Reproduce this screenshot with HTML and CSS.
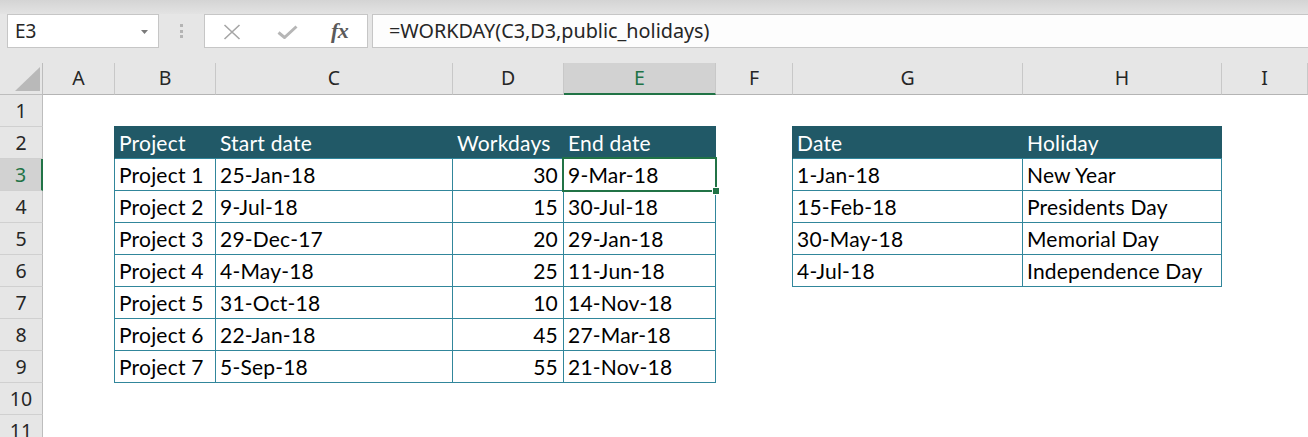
FILE: index.html
```html
<!DOCTYPE html>
<html>
<head>
<meta charset="utf-8">
<title>WORKDAY</title>
<link rel="stylesheet" href="styles.css">
</head>
<body>
<div class="app">
  <div class="topstrip"></div>
  <div class="fbar">
    <div class="namebox"><span>E3</span><svg class="dd" width="7" height="4" viewBox="0 0 7 4"><path d="M0 0h7L3.5 4z" fill="#7a7a7a"/></svg></div>
    <div class="grip"><i></i><i></i><i></i></div>
    <div class="fxbox">
      <svg class="ico" width="18" height="16" viewBox="0 0 18 16"><path d="M1.5 1L16.5 15M16.5 1L1.5 15" stroke="#a6a6a6" stroke-width="1.6" fill="none"/></svg>
      <svg class="ico" width="21" height="14" viewBox="0 0 21 14"><path d="M1.5 7.5L7.5 12.5L19.5 1.5" stroke="#b6b6b6" stroke-width="3" fill="none" stroke-linejoin="miter"/></svg>
      <span class="fx">fx</span>
    </div>
    <div class="formula">=WORKDAY(C3,D3,public_holidays)</div>
  </div>
  <div class="sheet">
    <div class="row colhead">
      <div class="corner"><svg width="25" height="24" viewBox="0 0 25 24"><path d="M25 0V24H0z" fill="#b9b9b9"/></svg></div>
      <div class="ch">A</div><div class="ch">B</div><div class="ch">C</div><div class="ch">D</div><div class="ch sel">E</div><div class="ch">F</div><div class="ch">G</div><div class="ch">H</div><div class="ch">I</div>
    </div>
    <div class="row">
      <div class="rh">1</div><div></div><div></div><div></div><div></div><div></div><div></div><div></div><div></div><div></div>
    </div>
    <div class="row">
      <div class="rh">2</div><div></div>
      <div class="th first">Project</div><div class="th">Start date</div><div class="th">Workdays</div><div class="th">End date</div>
      <div></div>
      <div class="th first">Date</div><div class="th">Holiday</div><div></div>
    </div>
    <div class="row">
      <div class="rh sel">3</div><div></div>
      <div class="td first">Project 1</div><div class="td">25-Jan-18</div><div class="td num">30</div><div class="td active">9-Mar-18<span class="selbox"><span class="handle"></span></span></div>
      <div></div>
      <div class="td first">1-Jan-18</div><div class="td">New Year</div><div></div>
    </div>
    <div class="row">
      <div class="rh">4</div><div></div>
      <div class="td first">Project 2</div><div class="td">9-Jul-18</div><div class="td num">15</div><div class="td">30-Jul-18</div>
      <div></div>
      <div class="td first">15-Feb-18</div><div class="td">Presidents Day</div><div></div>
    </div>
    <div class="row">
      <div class="rh">5</div><div></div>
      <div class="td first">Project 3</div><div class="td">29-Dec-17</div><div class="td num">20</div><div class="td">29-Jan-18</div>
      <div></div>
      <div class="td first">30-May-18</div><div class="td">Memorial Day</div><div></div>
    </div>
    <div class="row">
      <div class="rh">6</div><div></div>
      <div class="td first">Project 4</div><div class="td">4-May-18</div><div class="td num">25</div><div class="td">11-Jun-18</div>
      <div></div>
      <div class="td first">4-Jul-18</div><div class="td">Independence Day</div><div></div>
    </div>
    <div class="row">
      <div class="rh">7</div><div></div>
      <div class="td first">Project 5</div><div class="td">31-Oct-18</div><div class="td num">10</div><div class="td">14-Nov-18</div>
      <div></div><div></div><div></div><div></div>
    </div>
    <div class="row">
      <div class="rh">8</div><div></div>
      <div class="td first">Project 6</div><div class="td">22-Jan-18</div><div class="td num">45</div><div class="td">27-Mar-18</div>
      <div></div><div></div><div></div><div></div>
    </div>
    <div class="row">
      <div class="rh">9</div><div></div>
      <div class="td first">Project 7</div><div class="td">5-Sep-18</div><div class="td num">55</div><div class="td">21-Nov-18</div>
      <div></div><div></div><div></div><div></div>
    </div>
    <div class="row">
      <div class="rh">10</div><div></div><div></div><div></div><div></div><div></div><div></div><div></div><div></div><div></div>
    </div>
    <div class="row">
      <div class="rh">11</div><div></div><div></div><div></div><div></div><div></div><div></div><div></div><div></div><div></div>
    </div>
  </div>
</div>
</body>
</html>
```

FILE: styles.css
```css
* { box-sizing: border-box; }
html, body { margin: 0; padding: 0; }
body {
  width: 1308px;
  height: 437px;
  overflow: hidden;
  background: #ffffff;
  font-family: "Noto Sans", "Open Sans", sans-serif;
  color: #262626;
}
.app {
  background: #e6e6e6;
  height: 437px;
  overflow: hidden;
}
.topstrip {
  height: 14px;
  background: linear-gradient(#d4d4d4, #e3e3e3);
}
.fbar {
  display: flex;
  height: 34px;
  padding-left: 7px;
}
.namebox {
  width: 152px;
  height: 34px;
  background: #ffffff;
  border: 1px solid #c6c6c6;
  display: flex;
  align-items: center;
  justify-content: space-between;
  padding: 0 10px 1px 7px;
  font-size: 19px;
  color: #262626;
}
.namebox .dd { margin-top: 2px; }
.grip {
  width: 45px;
  display: flex;
  flex-direction: column;
  align-items: center;
  justify-content: center;
  gap: 2.5px;
}
.grip i {
  display: block;
  width: 3px;
  height: 3px;
  background: #b4b4b4;
}
.fxbox {
  width: 164px;
  height: 34px;
  background: #ffffff;
  border: 1px solid #c6c6c6;
  display: flex;
  align-items: center;
  padding: 0 0 0 18px;
}
.fxbox .ico:first-child { margin-right: 36px; margin-top: 1px; }
.fxbox .ico:nth-child(2) { margin-right: 33px; margin-top: 2px; }
.fx {
  font-family: "Liberation Serif", "DejaVu Serif", serif;
  font-style: italic;
  font-weight: bold;
  font-size: 22px;
  color: #5a5a5a;
  letter-spacing: -0.5px;
  margin-top: -1px;
}
.formula {
  flex: 1;
  margin-left: 4px;
  height: 34px;
  background: #fdfdfd;
  border: 1px solid #c6c6c6;
  border-right: none;
  padding-left: 16px;
  font-size: 19.8px;
  line-height: 31px;
  color: #262626;
  white-space: nowrap;
}
.sheet {
  margin-top: 15px;
  background: #ffffff;
}
.row {
  display: grid;
  grid-template-columns: 43px 72px 101px 237px 111px 152px 77px 230px 199px 1fr;
  height: 32px;
}
.colhead {
  background: #e6e6e6;
}
.corner {
  border-right: 1px solid #bdbdbd;
  border-bottom: 1px solid #bdbdbd;
  display: flex;
  align-items: flex-end;
  justify-content: flex-end;
  padding: 0 2px 3px 0;
}
.ch {
  border-right: 1px solid #c8c8c8;
  border-bottom: 1px solid #b4b4b4;
  text-align: center;
  font-size: 19.5px;
  line-height: 30px;
  color: #262626;
}
.ch.sel {
  background: #d2d2d2;
  color: #217346;
  border-bottom: 2px solid #217346;
}
.rh {
  background: #e6e6e6;
  border-right: 1px solid #bdbdbd;
  border-bottom: 1px solid #d0d0d0;
  text-align: center;
  font-size: 19.5px;
  line-height: 31px;
  color: #262626;
  overflow: hidden;
}
.rh.sel {
  background: #d2d2d2;
  color: #217346;
  border-right: 2px solid #217346;
}
.th, .td {
  font-family: Lato, "Liberation Sans", sans-serif;
  font-size: 21px;
  letter-spacing: 0.2px;
  line-height: 31px;
  padding: 0 5px 0 4px;
  white-space: nowrap;
  overflow: visible;
}
.th {
  background: #215967;
  color: #ffffff;
  border-bottom: 1px solid #31869b;
  box-shadow: 0 -1px 0 #215967;
}
.th.first {
  box-shadow: 0 -1px 0 #215967, -1px 0 0 #215967, -1px -1px 0 #215967;
}
.td {
  color: #000000;
  border-right: 1px solid #31869b;
  border-bottom: 1px solid #31869b;
}
.td.first {
  box-shadow: -1px 0 0 #31869b;
}
.td.num { text-align: right; }
.td.active { position: relative; }
.selbox {
  position: absolute;
  left: -2px;
  top: -2px;
  right: -2px;
  bottom: -2px;
  border: 2px solid #217346;
}
.handle {
  position: absolute;
  right: -5px;
  bottom: -5px;
  width: 8px;
  height: 8px;
  background: #217346;
  border: 1px solid #ffffff;
}
```
